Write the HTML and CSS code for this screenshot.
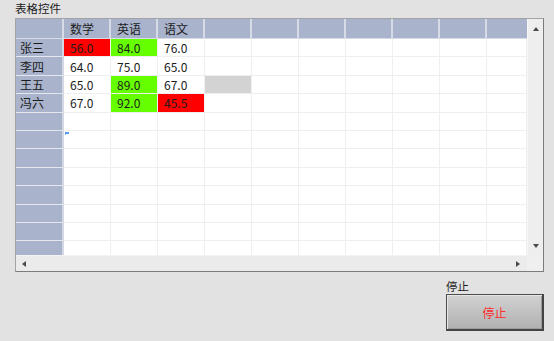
FILE: index.html
```html
<!DOCTYPE html>
<html lang="zh">

<head>
    <meta charset="UTF-8">
    <title>表格控件</title>
    <link rel="stylesheet" href="styles.css">
</head>

<body>

    <div class="panel">
        <div class="ctrl-label">表格控件</div>

        <div class="table-frame">
            <div class="table-view">
                <div class="grid" id="grid">
                    <div class="hd corner-hd"></div>
                    <div class="hd">数学</div>
                    <div class="hd">英语</div>
                    <div class="hd">语文</div>
                    <div class="hd"></div>
                    <div class="hd"></div>
                    <div class="hd"></div>
                    <div class="hd"></div>
                    <div class="hd"></div>
                    <div class="hd"></div>
                    <div class="hd last"></div>

                    <div class="rh">张三</div>
                    <div class="cell red">56.0</div>
                    <div class="cell green">84.0</div>
                    <div class="cell">76.0</div>
                    <div class="cell"></div><div class="cell"></div><div class="cell"></div><div class="cell"></div>
                    <div class="cell"></div><div class="cell"></div><div class="cell"></div>

                    <div class="rh">李四</div>
                    <div class="cell">64.0</div>
                    <div class="cell">75.0</div>
                    <div class="cell">65.0</div>
                    <div class="cell"></div><div class="cell"></div><div class="cell"></div><div class="cell"></div>
                    <div class="cell"></div><div class="cell"></div><div class="cell"></div>

                    <div class="rh">王五</div>
                    <div class="cell">65.0</div>
                    <div class="cell green">89.0</div>
                    <div class="cell">67.0</div>
                    <div class="cell grey"></div><div class="cell"></div><div class="cell"></div><div class="cell"></div>
                    <div class="cell"></div><div class="cell"></div><div class="cell"></div>

                    <div class="rh">冯六</div>
                    <div class="cell">67.0</div>
                    <div class="cell green">92.0</div>
                    <div class="cell red">45.5</div>
                    <div class="cell"></div><div class="cell"></div><div class="cell"></div><div class="cell"></div>
                    <div class="cell"></div><div class="cell"></div><div class="cell"></div>
                </div>
            </div>

            <div class="vscroll">
                <svg width="6" height="4" viewBox="0 0 6 4"><polygon points="0,4 6,4 3,0" fill="#4a4a4a" /></svg>
                <svg width="6" height="4" viewBox="0 0 6 4"><polygon points="0,0 6,0 3,4" fill="#4a4a4a" /></svg>
            </div>

            <div class="hscroll">
                <svg width="4" height="6" viewBox="0 0 4 6"><polygon points="4,0 4,6 0,3" fill="#4a4a4a" /></svg>
                <svg width="4" height="6" viewBox="0 0 4 6"><polygon points="0,0 0,6 4,3" fill="#4a4a4a" /></svg>
            </div>

            <div class="scroll-corner"></div>
        </div>

        <div class="stop-box">
            <div class="stop-label">停止</div>
            <button class="stop-btn">停止</button>
        </div>
    </div>

    <script>
        // empty rows below the data, the grid is clipped by the view
        const grid = document.getElementById("grid");

        for (let r = 0; r < 8; r++) {
            const head = document.createElement("div");
            head.classList.add("rh");
            grid.appendChild(head);

            for (let c = 0; c < 10; c++) {
                const cell = document.createElement("div");
                cell.classList.add("cell");
                if (r === 1 && c === 0) {
                    const mark = document.createElement("span");
                    mark.classList.add("cursor-mark");
                    cell.appendChild(mark);
                }
                grid.appendChild(cell);
            }
        }
    </script>

</body>

</html>
```

FILE: styles.css
```css
body {
    margin: 0;
    padding: 0;
    background-color: #e2e2e2;
    font-family: "Noto Sans CJK SC", "Noto Sans", sans-serif;
    color: #1c1c1c;
}

.panel {
    width: 554px;
    height: 341px;
    display: flex;
    flex-direction: column;
}

.ctrl-label {
    height: 18px;
    line-height: 16px;
    font-size: 11.5px;
    padding-left: 15px;
}

.table-frame {
    margin-left: 15px;
    width: 527px;
    display: grid;
    grid-template-columns: 511px 16px;
    grid-template-rows: 236px 16px;
    border: 1px solid #a3a3a3;
    border-right-color: #7c7c7c;
    border-bottom-color: #7c7c7c;
    background-color: #ffffff;
}

.table-view {
    overflow: hidden;
    background-color: #ffffff;
}

.grid {
    display: grid;
    grid-template-columns: 48px repeat(9, 47px) 40px;
    grid-template-rows: 20px;
    grid-auto-rows: 18.4px;
    font-size: 12px;
}

.grid>div {
    box-sizing: border-box;
    display: flex;
    align-items: center;
    white-space: nowrap;
    position: relative;
}

.hd {
    background-color: #a9b3cc;
    border-right: 2px solid #d6dbe6;
    border-bottom: 1px solid #d6dbe6;
    padding-left: 6px;
}

.hd.last {
    border-right: none;
}

.rh {
    background-color: #a9b3cc;
    border-right: 2px solid #d3d8e3;
    border-bottom: 1px solid #e4e7ee;
    padding-left: 4px;
}

.cell {
    border-right: 1px solid #efefef;
    border-bottom: 1px solid #efefef;
    padding-left: 6px;
}

.cell.red {
    background-color: #ff0000;
}

.cell.green {
    background-color: #66ff00;
}

.cell.grey {
    background-color: #d3d3d3;
}

.cursor-mark {
    position: absolute;
    left: 1px;
    top: 1px;
    width: 4px;
    height: 3px;
    border-top: 2px solid #5b9cf0;
    border-left: 1px solid #5b9cf0;
    box-sizing: border-box;
}

.vscroll {
    background-color: #eeeeee;
    border-left: 1px solid #f6f6f6;
    display: flex;
    flex-direction: column;
    justify-content: space-between;
    align-items: center;
    padding: 8px 0 7px;
}

.hscroll {
    background-color: #ebebeb;
    border-top: 1px solid #f4f4f4;
    display: flex;
    justify-content: space-between;
    align-items: center;
    padding: 0 7px 0 6px;
}

.scroll-corner {
    background-color: #efefef;
}

.stop-box {
    align-self: flex-end;
    margin-right: 10px;
    margin-top: 7px;
    display: flex;
    flex-direction: column;
}

.stop-label {
    font-size: 11.5px;
    line-height: 15px;
}

.stop-btn {
    width: 98px;
    height: 37px;
    box-sizing: border-box;
    border: 1px solid #4e4e4e;
    border-right: 2px solid #444;
    border-bottom: 2px solid #444;
    background: linear-gradient(#d2d2d2, #b0b0b0);
    box-shadow: inset 1px 1px 0 #e6e6e6, inset -1px -1px 0 #9a9a9a;
    color: #ff2a2a;
    font-family: "Noto Sans CJK SC", sans-serif;
    font-size: 12px;
    padding: 0;
    cursor: pointer;
}
```
